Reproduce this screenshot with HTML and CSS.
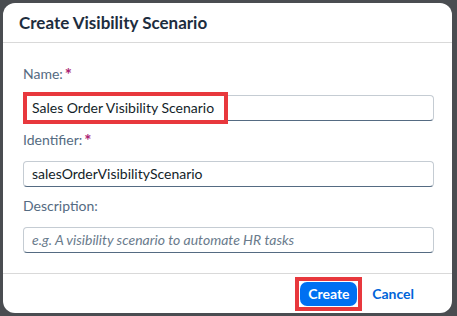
FILE: index.html
```html
<!DOCTYPE html>
<html>
<head>
<meta charset="utf-8">
<link rel="stylesheet" href="styles.css">
</head>
<body>
<div class="dialog">
  <div class="header"><h1 class="title">Create Visibility Scenario</h1></div>
  <div class="content">
    <div class="field">
      <label class="label">Name:<span class="req">*</span></label>
      <div class="input-wrap">
        <div class="input">Sales Order Visibility Scenario</div>
        <div class="mark"></div>
      </div>
    </div>
    <div class="field">
      <label class="label">Identifier:<span class="req">*</span></label>
      <div class="input">salesOrderVisibilityScenario</div>
    </div>
    <div class="field">
      <label class="label">Description:</label>
      <div class="input placeholder">e.g. A visibility scenario to automate HR tasks</div>
    </div>
  </div>
  <div class="footer">
    <div class="mark-btn"><button class="btn primary">Create</button></div>
    <button class="btn link">Cancel</button>
  </div>
</div>
</body>
</html>
```
FILE: styles.css
```css
html, body { margin: 0; padding: 0; }
body {
  background: #4a4d51;
  width: 457px;
  height: 316px;
  padding: 3px 5px 3px 3px;
  box-sizing: border-box;
  font-family: Lato, "Liberation Sans", sans-serif;
}
.dialog {
  width: 449px;
  height: 310px;
  background: #fff;
  border-radius: 12px;
  display: flex;
  flex-direction: column;
  overflow: hidden;
}
.header {
  height: 39px;
  border-bottom: 1px solid #d9d9d9;
  display: flex;
  align-items: center;
  padding-left: 16px;
}
.title {
  margin: 0;
  font-size: 17px;
  font-weight: 700;
  color: #1d2d3e;
}
.content {
  flex: 1;
  padding: 22px 18px 0 20px;
}
.field {
  display: flex;
  flex-direction: column;
  margin-bottom: 10px;
}
.label {
  height: 18px;
  line-height: 18px;
  font-size: 14px;
  color: #556b82;
  margin-bottom: 12px;
}
.req {
  color: #aa1f74;
  font-weight: 700;
  font-size: 17px;
  line-height: 0;
  vertical-align: -2px;
  margin-left: 2px;
}
.input-wrap { position: relative; }
.input {
  height: 26px;
  box-sizing: border-box;
  border: 1px solid #c5ccd3;
  border-bottom-color: #556b82;
  border-radius: 4px;
  padding: 0 8px;
  line-height: 24px;
  font-size: 14px;
  color: #131e29;
  white-space: nowrap;
}
.placeholder {
  font-style: italic;
  color: #6a7b8c;
}
.mark {
  position: absolute;
  left: 0;
  top: -3px;
  width: 205px;
  height: 32px;
  box-sizing: border-box;
  border: 4px solid #e8383d;
}
.footer {
  height: 39px;
  border-top: 1px solid #d9d9d9;
  display: flex;
  align-items: center;
  justify-content: flex-end;
  padding-right: 30px;
  gap: 2px;
}
.mark-btn {
  border: 4px solid #e8383d;
  padding: 1px;
  display: flex;
}
.btn {
  font-family: inherit;
  font-size: 14px;
  font-weight: 700;
  border: none;
  height: 24px;
  padding: 0 8px;
  cursor: pointer;
}
.primary {
  background: #0070f2;
  color: #fff;
  border-radius: 7px;
  width: 57px;
}
.link {
  background: transparent;
  color: #0064d9;
}
```
